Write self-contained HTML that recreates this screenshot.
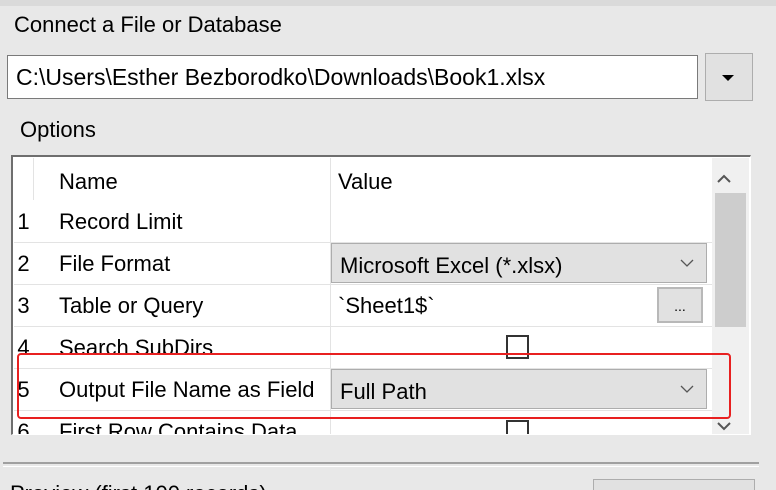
<!DOCTYPE html>
<html style="overflow:hidden"><head><meta charset="utf-8"><style>
html,body{overflow:hidden}
body{margin:0;width:776px;height:490px;background:#e8e8e8;font-family:"Liberation Sans",sans-serif;color:#000;position:relative}
.a{position:absolute}
.t{font-size:22px;white-space:nowrap}
.row{position:absolute;left:14px;width:698px;height:42px;border-bottom:1px solid #e3e3e3}
.n{position:absolute;left:0;width:19px;text-align:center;top:9px;font-size:22px}
.nm{position:absolute;left:45px;top:9px;font-size:22px;white-space:nowrap}
.v{position:absolute;left:316px;top:0;width:382px;height:42px;border-left:1px solid #e3e3e3;box-sizing:border-box}
.combo{background:#e1e1e1;border:1px solid #adadad;box-sizing:border-box;left:317px;top:1px;width:376px;height:40px}
.chev{position:absolute;right:12px;top:15px}
.cb{position:absolute;left:175px;width:23px;height:24px;border:2px solid #333;box-sizing:border-box;background:#fff}
</style></head><body>
<div class="a" style="left:0;top:0;width:776px;height:6px;background:#dadada"></div>
<div class="a t" style="left:14px;top:12px">Connect a File or Database</div>
<div class="a" style="left:7px;top:55px;width:691px;height:44px;background:#fff;border:1px solid #7a7a7a;box-sizing:border-box"></div>
<div class="a t" style="left:16px;top:64px;font-size:23px">C:\Users\Esther Bezborodko\Downloads\Book1.xlsx</div>
<div class="a" style="left:705px;top:53px;width:48px;height:48px;background:#e1e1e1;border:1px solid #adadad;box-sizing:border-box"></div>
<svg class="a" style="left:721px;top:74px" width="14" height="8"><path d="M1 1h12L7 7z" fill="#000"/></svg>
<div class="a t" style="left:20px;top:117px">Options</div>
<div class="a" style="left:11px;top:155px;width:740px;height:280px;background:#fff;border-top:2px solid #6e6e6e;border-left:2px solid #6e6e6e;border-right:1px solid #fff;border-bottom:1px solid #fff;box-sizing:border-box"></div>
<div class="a" style="left:14px;top:158px;width:698px;height:42px">
<div class="a" style="left:19px;top:0;width:1px;height:42px;background:#e3e3e3"></div>
<div class="nm" style="left:45px;top:11px">Name</div>
<div class="a" style="left:316px;top:0;width:1px;height:42px;background:#e3e3e3"></div>
<div class="a t" style="left:324px;top:11px">Value</div>
</div>
<div class="row" style="top:200px"><div class="n">1</div><div class="nm">Record Limit</div><div class="v"></div></div>
<div class="row" style="top:242px"><div class="n">2</div><div class="nm">File Format</div><div class="v"></div><div class="a combo"><span class="a t" style="left:8px;top:9px">Microsoft Excel (*.xlsx)</span><svg class="chev" width="14" height="8"><path d="M1 1l6 6 6-6" fill="none" stroke="#555" stroke-width="1.3"/></svg></div></div>
<div class="row" style="top:284px"><div class="n">3</div><div class="nm">Table or Query</div><div class="v"></div><div class="a t" style="left:324px;top:9px">`Sheet1$`</div><div class="a" style="left:643px;top:3px;width:46px;height:36px;background:#e1e1e1;border:2px solid #b8b8b8;box-sizing:border-box;text-align:center;font-size:14px;line-height:34px">...</div></div>
<div class="row" style="top:326px"><div class="n">4</div><div class="nm">Search SubDirs</div><div class="v"><div class="cb" style="top:9px;left:175px"></div></div></div>
<div class="row" style="top:368px"><div class="n">5</div><div class="nm">Output File Name as Field</div><div class="v"></div><div class="a combo"><span class="a t" style="left:8px;top:9px">Full Path</span><svg class="chev" width="14" height="8"><path d="M1 1l6 6 6-6" fill="none" stroke="#555" stroke-width="1.3"/></svg></div></div>
<div class="row" style="top:410px;height:24px;border:none;overflow:hidden"><div class="n">6</div><div class="nm">First Row Contains Data</div><div class="v"><div class="cb" style="top:10px;left:175px"></div></div></div>
<div class="a" style="left:712px;top:158px;width:37px;height:276px;background:#f0f0f0"></div>
<div class="a" style="left:715px;top:193px;width:31px;height:134px;background:#cdcdcd"></div>
<svg class="a" style="left:717px;top:174px" width="14" height="10"><path d="M1 8l6-6 6 6" fill="none" stroke="#555" stroke-width="2"/></svg>
<svg class="a" style="left:717px;top:421px" width="14" height="10"><path d="M1 2l6 6 6-6" fill="none" stroke="#555" stroke-width="2"/></svg>
<div class="a" style="left:17px;top:353px;width:714px;height:66px;border:2px solid #e82020;border-radius:4px;box-sizing:border-box"></div>
<div class="a" style="left:3px;top:462px;width:756px;height:2px;background:#a0a0a0"></div>
<div class="a" style="left:3px;top:466px;width:756px;height:1px;background:#fff"></div>
<div class="a t" style="left:10px;top:481px">Preview (first 100 records)</div>
<div class="a" style="left:593px;top:479px;width:160px;height:20px;background:#e1e1e1;border:1px solid #adadad"></div>
</body></html>
